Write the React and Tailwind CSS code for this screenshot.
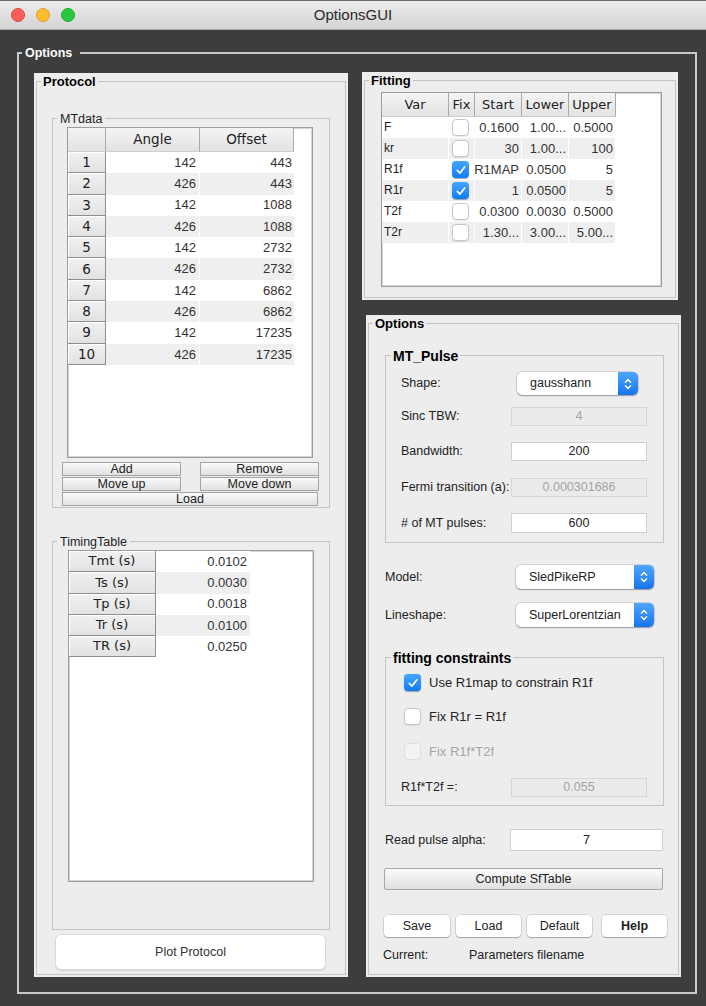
import React from 'react';

const mtRows = [
  [142, 443], [426, 443], [142, 1088], [426, 1088], [142, 2732],
  [426, 2732], [142, 6862], [426, 6862], [142, 17235], [426, 17235],
];

const timing = [
  ['Tmt (s)', '0.0102'],
  ['Ts (s)', '0.0030'],
  ['Tp (s)', '0.0018'],
  ['Tr (s)', '0.0100'],
  ['TR (s)', '0.0250'],
];

const fitRows = [
  { v: 'F', fix: false, start: '0.1600', lower: '1.00...', upper: '0.5000' },
  { v: 'kr', fix: false, start: '30', lower: '1.00...', upper: '100' },
  { v: 'R1f', fix: true, start: 'R1MAP', lower: '0.0500', upper: '5' },
  { v: 'R1r', fix: true, start: '1', lower: '0.0500', upper: '5' },
  { v: 'T2f', fix: false, start: '0.0300', lower: '0.0030', upper: '0.5000' },
  { v: 'T2r', fix: false, start: '1.30...', lower: '3.00...', upper: '5.00...' },
];

const dejavu = "font-['DejaVu_Sans',sans-serif]";
const hdr = 'flex items-center justify-center bg-gradient-to-b from-[#f4f4f4] to-[#e3e3e3] border-r border-r-[#a9a9a9] border-b border-b-[#cfcfcf] text-[#222]';
const rowHdr = 'flex items-center justify-center bg-gradient-to-b from-[#f1f1f1] to-[#e2e2e2] border-r border-b border-[#8f8f8f] shadow-[inset_1px_1px_0_#ffffff] text-[#222]';

function Panel({ title, className = '', children }) {
  return (
    <div className={`flex flex-col bg-[#ededed] px-[2px] pt-[8px] pb-[2px] ${className}`}>
      <div className="flex flex-1 flex-col border border-[#c4c4c4]">
        <span className="-mt-[8px] ml-[4px] block w-fit bg-[#ededed] px-[2px] text-[13px] font-bold leading-[16px] text-black">
          {title}
        </span>
        {children}
      </div>
    </div>
  );
}

function Group({ title, bold, className = '', children }) {
  const titleCls = bold
    ? '-mt-[9px] ml-[5px] px-[2px] text-[14px] font-bold leading-[18px] text-black'
    : '-mt-[8px] ml-[4px] px-[3px] text-[12.5px] leading-[16px] text-[#222]';
  return (
    <div className={`flex flex-col border border-[#c4c4c4] ${className}`}>
      <span className={`block w-fit bg-[#ededed] ${titleCls}`}>{title}</span>
      {children}
    </div>
  );
}

function Check({ checked, disabled }) {
  if (checked) {
    return (
      <span className="flex h-[17px] w-[17px] shrink-0 items-center justify-center rounded-[4px] bg-gradient-to-b from-[#45a6ff] to-[#0b7bf4] shadow-[0_0.5px_1px_rgba(0,0,0,0.35)]">
        <svg viewBox="0 0 12 12" className="h-[12px] w-[12px]">
          <path d="M2.3 6.4 L4.9 9.1 L9.7 2.9" stroke="#ffffff" strokeWidth="1.7" fill="none" strokeLinecap="round" strokeLinejoin="round" />
        </svg>
      </span>
    );
  }
  return (
    <span
      className={`block h-[17px] w-[17px] shrink-0 rounded-[4px] border ${
        disabled ? 'border-[#dedede] bg-[#f3f3f3]' : 'border-[#c6c6c6] bg-white shadow-[0_1px_1px_rgba(0,0,0,0.08)]'
      }`}
    />
  );
}

function Popup({ value, className = '' }) {
  return (
    <div className={`flex overflow-hidden rounded-[5px] bg-white shadow-[0_0_0_0.5px_rgba(0,0,0,0.22),0_1px_1.5px_rgba(0,0,0,0.28)] ${className}`}>
      <span className="flex flex-1 items-center pl-[13px] text-[12.5px] text-[#222]">{value}</span>
      <span className="flex w-[20px] items-center justify-center bg-gradient-to-b from-[#4fa6ff] to-[#1573ec]">
        <svg viewBox="0 0 10 16" className="h-[16px] w-[10px]">
          <path d="M2.4 6.2 L5 3.4 L7.6 6.2 M2.4 9.8 L5 12.6 L7.6 9.8" stroke="#ffffff" strokeWidth="1.4" fill="none" strokeLinecap="round" strokeLinejoin="round" />
        </svg>
      </span>
    </div>
  );
}

function Field({ value, disabled, className = '' }) {
  return (
    <div
      className={`flex items-center justify-center border text-[12.5px] ${
        disabled ? 'border-[#d6d6d6] bg-[#ebebeb] text-[#a3a3a3]' : 'border-[#cfcfcf] bg-white text-[#222]'
      } ${className}`}
    >
      {value}
    </div>
  );
}

function SmallButton({ children, className = '' }) {
  return (
    <div className={`flex h-[14px] items-center justify-center border border-[#a3a3a3] bg-gradient-to-b from-[#fafafa] to-[#e1e1e1] text-[12.5px] leading-[13px] text-[#222] ${className}`}>
      {children}
    </div>
  );
}

function MacButton({ children, bold, className = 'w-[65px]' }) {
  return (
    <div className={`flex h-[22px] items-center justify-center rounded-[4px] bg-white text-[12.5px] text-[#222] shadow-[0_0_0_0.5px_rgba(0,0,0,0.2),0_1px_1px_rgba(0,0,0,0.22)] ${bold ? 'font-bold' : ''} ${className}`}>
      {children}
    </div>
  );
}

function MtTable() {
  return (
    <div className="ml-[14px] h-[331px] w-[246px] border border-[#9c9c9c] bg-white shadow-[inset_0_0_0_1px_#d6d6d6]">
      <div className={`flex h-[24px] ${dejavu} text-[13.5px]`}>
        <div className={`w-[38px] ${hdr}`} />
        <div className={`w-[94px] ${hdr}`}>Angle</div>
        <div className={`w-[94px] ${hdr}`}>Offset</div>
      </div>
      {mtRows.map(([a, o], i) => (
        <div key={i} className="flex h-[21.3px] text-[13px] text-[#333]">
          <div className={`w-[38px] ${rowHdr} ${dejavu} text-[13.5px]`}>{i + 1}</div>
          <div className={`flex w-[94px] items-center justify-end border-r border-white pr-[3px] ${i % 2 ? 'bg-[#efefef]' : 'bg-white'}`}>{a}</div>
          <div className={`flex w-[94px] items-center justify-end pr-[2px] ${i % 2 ? 'bg-[#efefef]' : 'bg-white'}`}>{o}</div>
        </div>
      ))}
    </div>
  );
}

function TimingTable() {
  return (
    <div className="ml-[15px] h-[332px] w-[246px] border border-[#9c9c9c] bg-white shadow-[inset_0_0_0_1px_#d6d6d6]">
      {timing.map(([k, v], i) => (
        <div key={k} className="flex h-[21.25px] text-[13px] text-[#333]">
          <div className={`w-[87px] ${rowHdr} ${dejavu} text-[13px]`}>{k}</div>
          <div className={`flex w-[94px] items-center justify-end pr-[3px] ${i % 2 ? 'bg-[#efefef]' : 'bg-white'}`}>{v}</div>
        </div>
      ))}
    </div>
  );
}

function FitTable() {
  const cell = 'flex items-center justify-end border-r border-white pr-[2px]';
  return (
    <div className="ml-[16px] mt-[3px] h-[195px] w-[281px] border border-[#9c9c9c] bg-white shadow-[inset_0_0_0_1px_#d6d6d6]">
      <div className={`flex h-[24px] ${dejavu} text-[13px]`}>
        <div className={`w-[67px] ${hdr}`}>Var</div>
        <div className={`w-[26px] ${hdr}`}>Fix</div>
        <div className={`w-[47px] ${hdr}`}>Start</div>
        <div className={`w-[47px] ${hdr}`}>Lower</div>
        <div className={`w-[47px] ${hdr}`}>Upper</div>
      </div>
      {fitRows.map((r, i) => (
        <div key={r.v} className={`flex h-[21px] w-[234px] text-[13px] text-[#333] ${i % 2 ? 'bg-[#efefef]' : 'bg-white'}`}>
          <div className="flex w-[67px] items-start border-r border-white pl-[2px] pt-[1px] text-[12px] text-[#222]">{r.v}</div>
          <div className="flex w-[26px] items-center border-r border-white pl-[3px]">
            <Check checked={r.fix} />
          </div>
          <div className={`w-[47px] ${cell}`}>{r.start}</div>
          <div className={`w-[47px] ${cell}`}>{r.lower}</div>
          <div className={`w-[47px] ${cell}`}>{r.upper}</div>
        </div>
      ))}
    </div>
  );
}

function TitleBar() {
  return (
    <div className="grid h-[30px] grid-cols-[1fr_auto_1fr] items-center border-t border-t-[#6a6a6a] border-b border-b-[#a8a8a8] bg-gradient-to-b from-[#ececec] to-[#d4d4d4]">
      <div className="flex items-center gap-[11px] pl-[11px]">
        <span className="h-[14px] w-[14px] rounded-full border border-[#e0443e] bg-[#fd5f57]" />
        <span className="h-[14px] w-[14px] rounded-full border border-[#dea123] bg-[#febc2e]" />
        <span className="h-[14px] w-[14px] rounded-full border border-[#1aab29] bg-[#29c840]" />
      </div>
      <div className="text-[15px] text-[#2a2a2a]">OptionsGUI</div>
      <div />
    </div>
  );
}

function LabelRow({ label, labelWidth, className = '', children }) {
  return (
    <div className={`flex items-center text-[12.5px] text-[#222] ${className}`}>
      <span className={labelWidth}>{label}</span>
      {children}
    </div>
  );
}

export default function App() {
  return (
    <div className="h-[1006px] w-[706px] overflow-hidden bg-[#3d3d3d] font-['Liberation_Sans',Arial,sans-serif]">
      <TitleBar />
      <div className="pl-[17px] pr-[9px] pt-[22px]">
        <div className="flex h-[942px] flex-col border-2 border-[#c9c9c9]">
          <span className="-mt-[9px] ml-[3px] block w-fit bg-[#3d3d3d] pl-[3px] pr-[8px] text-[12.5px] font-bold leading-[16px] text-white">
            Options
          </span>
          <div className="flex items-start pl-[15px]">
            <Panel title="Protocol" className="mt-[12px] h-[904px] w-[314px]">
              <Group title="MTdata" className="ml-[15px] mt-[28px] h-[390px] w-[278px]">
                <MtTable />
                <div className="ml-[9px] mt-[4px] flex flex-col gap-[1px]">
                  <div className="flex gap-[19px]">
                    <SmallButton className="w-[119px]">Add</SmallButton>
                    <SmallButton className="w-[119px]">Remove</SmallButton>
                  </div>
                  <div className="flex gap-[19px]">
                    <SmallButton className="w-[119px]">Move up</SmallButton>
                    <SmallButton className="w-[119px]">Move down</SmallButton>
                  </div>
                  <SmallButton className="w-[256px]">Load</SmallButton>
                </div>
              </Group>
              <Group title="TimingTable" className="ml-[15px] mt-[33px] h-[389px] w-[278px]">
                <TimingTable />
              </Group>
              <div className="ml-[18px] mt-[4px] flex h-[36px] w-[271px] items-center justify-center rounded-[6px] border border-[#d9d9d9] bg-white text-[12.5px] text-[#333] shadow-[0_1px_1px_rgba(0,0,0,0.1)]">
                Plot Protocol
              </div>
            </Panel>

            <div className="ml-[14px] mt-[11px] flex flex-col">
              <Panel title="Fitting" className="h-[228px] w-[316px]">
                <FitTable />
              </Panel>

              <Panel title="Options" className="ml-[4px] mt-[15px] h-[662px] w-[315px]">
                <Group title="MT_Pulse" bold className="ml-[16px] mt-[23px] h-[188px] w-[279px]">
                  <LabelRow label="Shape:" labelWidth="w-[116px]" className="mt-[7px] h-[23px] pl-[15px]">
                    <Popup value="gausshann" className="h-[23px] w-[121px]" />
                  </LabelRow>
                  <LabelRow label="Sinc TBW:" labelWidth="w-[110px]" className="mt-[12px] h-[19px] pl-[15px]">
                    <Field value="4" disabled className="h-[19px] w-[136px]" />
                  </LabelRow>
                  <LabelRow label="Bandwidth:" labelWidth="w-[110px]" className="mt-[16px] h-[19px] pl-[15px]">
                    <Field value="200" className="h-[19px] w-[136px]" />
                  </LabelRow>
                  <LabelRow label="Fermi transition (a):" labelWidth="w-[110px]" className="mt-[17px] h-[19px] pl-[15px]">
                    <Field value="0.000301686" disabled className="h-[19px] w-[136px]" />
                  </LabelRow>
                  <LabelRow label="# of MT pulses:" labelWidth="w-[110px]" className="mt-[16px] h-[20px] pl-[15px]">
                    <Field value="600" className="h-[20px] w-[136px]" />
                  </LabelRow>
                </Group>

                <LabelRow label="Model:" labelWidth="w-[131px]" className="ml-[16px] mt-[22px] h-[24px]">
                  <Popup value="SledPikeRP" className="h-[24px] w-[138px]" />
                </LabelRow>
                <LabelRow label="Lineshape:" labelWidth="w-[131px]" className="ml-[16px] mt-[14px] h-[24px]">
                  <Popup value="SuperLorentzian" className="h-[24px] w-[138px]" />
                </LabelRow>

                <Group title="fitting constraints" bold className="ml-[16px] mt-[30px] h-[149px] w-[279px]">
                  <div className="ml-[18px] mt-[7px] flex h-[17px] items-center gap-[8px] text-[13px] text-[#222]">
                    <Check checked />
                    <span>Use R1map to constrain R1f</span>
                  </div>
                  <div className="ml-[18px] mt-[17px] flex h-[17px] items-center gap-[8px] text-[13px] text-[#222]">
                    <Check />
                    <span>Fix R1r = R1f</span>
                  </div>
                  <div className="ml-[18px] mt-[18px] flex h-[17px] items-center gap-[8px] text-[13px] text-[#a5a5a5]">
                    <Check disabled />
                    <span>Fix R1f*T2f</span>
                  </div>
                  <LabelRow label="R1f*T2f =:" labelWidth="w-[110px]" className="mt-[18px] h-[19px] pl-[15px]">
                    <Field value="0.055" disabled className="h-[19px] w-[136px]" />
                  </LabelRow>
                </Group>

                <LabelRow label="Read pulse alpha:" labelWidth="w-[125px]" className="ml-[16px] mt-[23px] h-[22px]">
                  <Field value="7" className="h-[22px] w-[153px]" />
                </LabelRow>

                <div className="ml-[15px] mt-[17px] flex h-[22px] w-[279px] items-center justify-center rounded-[2px] border border-[#a6a6a6] bg-gradient-to-b from-[#fbfbfb] to-[#e0e0e0] text-[12.5px] text-[#222]">
                  Compute SfTable
                </div>

                <div className="ml-[15px] mt-[25px] flex h-[22px] items-center">
                  <MacButton className="mr-[6px] w-[66px]">Save</MacButton>
                  <MacButton className="mr-[6px] w-[65px]">Load</MacButton>
                  <MacButton className="mr-[10px] w-[65px]">Default</MacButton>
                  <MacButton bold>Help</MacButton>
                </div>

                <div className="ml-[14px] mt-[10px] flex h-[16px] items-center text-[12.5px] text-[#222]">
                  <span className="w-[86px]">Current:</span>
                  <span>Parameters filename</span>
                </div>
              </Panel>
            </div>
          </div>
        </div>
      </div>
    </div>
  );
}
